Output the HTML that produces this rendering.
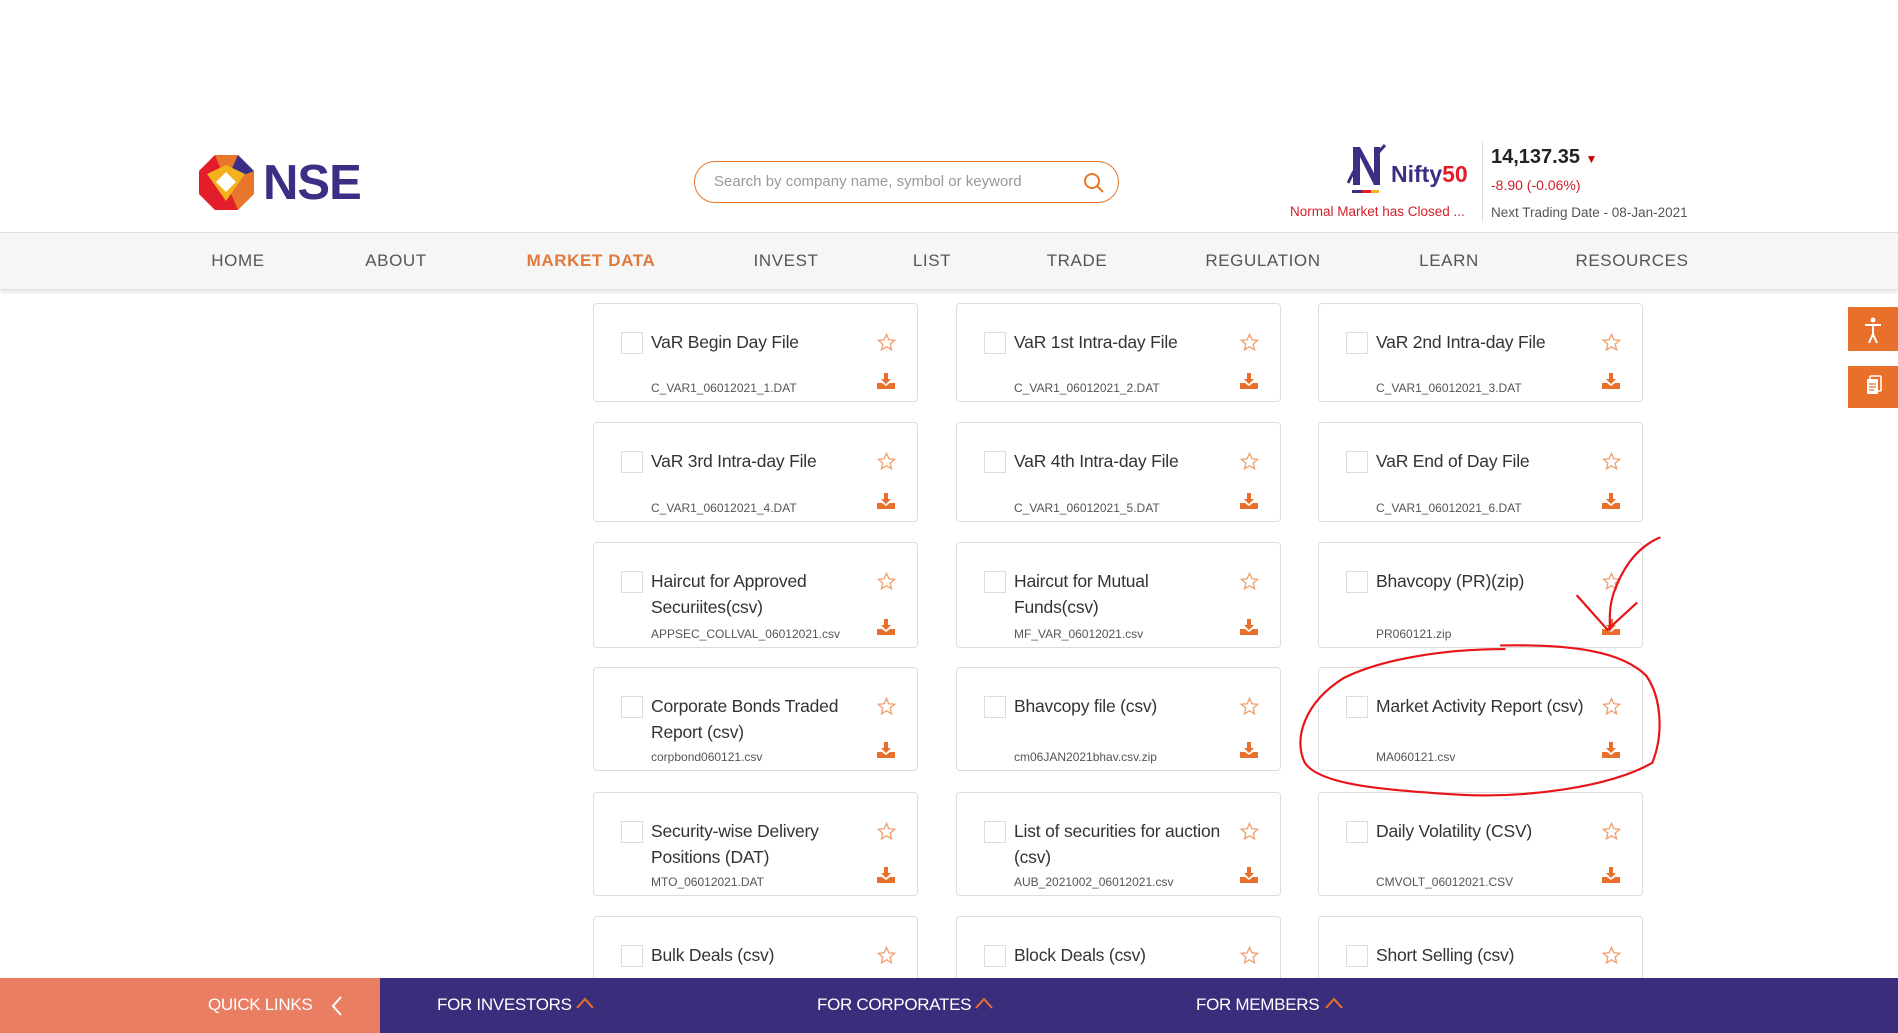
<!DOCTYPE html>
<html><head><meta charset="utf-8">
<style>
*{margin:0;padding:0;box-sizing:border-box}
body{width:1898px;height:1033px;position:relative;overflow:hidden;background:#fff;font-family:"Liberation Sans",sans-serif}
.abs{position:absolute}
.nav{position:absolute;left:0;top:232px;width:1898px;height:57px;background:#f6f6f6;border-top:1px solid #ddd;box-shadow:0 3px 4px rgba(0,0,0,.12)}
.nav span{position:absolute;top:18px;font-size:17px;color:#555;letter-spacing:.6px;transform:translateX(-50%)}
.card{position:absolute;width:325px;border:1px solid #ddd;border-radius:4px;background:#fff}
.card .cb{position:absolute;left:27px;top:28px;width:22px;height:22px;border:1px solid #ddd}
.card .t{position:absolute;left:57px;top:25px;width:220px;font-size:17.5px;line-height:26px;color:#333;letter-spacing:-.2px}
.card .f{position:absolute;left:57px;bottom:6px;font-size:12px;color:#555}
.card .s{position:absolute;right:21px;top:29px}
.card .d{position:absolute;right:22px;bottom:12px}
.bot{position:absolute;top:978px;height:55px;color:#fff;font-size:17px;letter-spacing:-.3px}
</style></head><body>
<svg class="abs" style="left:199px;top:155px" width="55" height="55" viewBox="0 0 55 55">
<polygon points="16,0 39,0 55,16 55,39 39,55 16,55 0,39 0,16" fill="#e8762c"/>
<polygon points="0,16 16,0 27,27 0,39" fill="#e31e2a"/>
<polygon points="0,39 27,27 39,55 16,55" fill="#e31e2a"/>
<polygon points="16,0 39,0 27,27" fill="#e8762c"/>
<polygon points="39,0 55,16 27,27" fill="#3b2f85"/>
<polygon points="8,19 27,10 46,19 27,46" fill="#f2b21c"/>
<polygon points="27,17 37,27 27,37 17,27" fill="#fff"/>
</svg>
<div class="abs" style="left:263px;top:153px;font-size:49px;font-weight:bold;color:#3b2f85;letter-spacing:-1px;line-height:60px">NSE</div>
<div class="abs" style="left:694px;top:161px;width:425px;height:42px;border:1px solid #e8762c;border-radius:21px"></div>
<div class="abs" style="left:714px;top:173px;font-size:15px;color:#999">Search by company name, symbol or keyword</div>
<svg class="abs" style="left:1083px;top:172px" width="22" height="22" viewBox="0 0 22 22"><circle cx="9" cy="9" r="7" fill="none" stroke="#e8762c" stroke-width="2"/><line x1="14" y1="14" x2="20" y2="20" stroke="#e8762c" stroke-width="2"/></svg>
<svg class="abs" style="left:1347px;top:143px" width="40" height="52" viewBox="0 0 40 52">
<path d="M6 4h7l14 26V4h6v38h-6L13 14v28H6z" fill="#3b2f85"/><path d="M1 40L7 28M31 10l7-8" stroke="#3b2f85" stroke-width="3"/>
<rect x="5" y="47" width="10" height="3" fill="#3b2f85"/><rect x="15" y="47" width="9" height="3" fill="#e31e2a"/><rect x="24" y="47" width="8" height="3" fill="#f2b21c"/></svg>
<div class="abs" style="left:1391px;top:161px;font-size:23px;font-weight:bold;color:#3b2f85">Nifty<span style="color:#e31e2a">50</span></div>
<div class="abs" style="left:1290px;top:204px;font-size:13.5px;color:#d0202a">Normal Market has Closed ...</div>
<div class="abs" style="left:1482px;top:142px;width:1px;height:80px;background:#ddd"></div>
<div class="abs" style="left:1491px;top:146px;font-size:20px;font-weight:bold;color:#222">14,137.35 <span style="color:#c00;font-size:12px">▼</span></div>
<div class="abs" style="left:1491px;top:177px;font-size:14px;color:#d0202a">-8.90 (-0.06%)</div>
<div class="abs" style="left:1491px;top:205px;font-size:13.5px;color:#555">Next Trading Date - 08-Jan-2021</div>
<div class="nav">
<span style="left:238px">HOME</span><span style="left:396px">ABOUT</span><span style="left:591px;color:#e07a3a;font-weight:bold">MARKET DATA</span><span style="left:786px">INVEST</span><span style="left:932px">LIST</span><span style="left:1077px">TRADE</span><span style="left:1263px">REGULATION</span><span style="left:1449px">LEARN</span><span style="left:1632px">RESOURCES</span>
</div>
<div class="abs" style="left:1848px;top:307px;width:50px;height:44px;background:#e8702a"><svg width="50" height="44" viewBox="0 0 50 44"><circle cx="25" cy="13" r="2.5" fill="#fff"/><path d="M17 18h16M25 18v9M25 27l-4 9M25 27l4 9" stroke="#fff" stroke-width="2" fill="none"/></svg></div>
<div class="abs" style="left:1848px;top:366px;width:50px;height:42px;background:#e8702a"><svg width="50" height="42" viewBox="0 0 50 42"><rect x="19" y="13" width="11" height="15" rx="1" fill="#fff"/><rect x="22" y="10" width="11" height="15" rx="1" fill="none" stroke="#fff" stroke-width="1.5"/><path d="M21 18h7M21 21h7M21 24h5" stroke="#e8702a" stroke-width="1.2"/></svg></div>

<svg width="0" height="0" style="position:absolute"><defs>
<symbol id="st" viewBox="0 0 20 20"><path d="M10 1.5l2.5 5.6 6 .6-4.6 4 1.4 6-5.3-3.2-5.3 3.2 1.4-6-4.6-4 6-.6z" fill="none" stroke="#f0a070" stroke-width="1.4"/></symbol>
<symbol id="dl" viewBox="0 0 18 16"><path d="M7 0h4v6h3l-5 5-5-5h3z" fill="#e8702a"/><path d="M0 10h5l4 3 4-3h5v6H0z" fill="#e8702a"/></symbol>
</defs></svg>

<div class="card" style="left:593px;top:303px;height:99px"><div class="cb"></div><div class="t">VaR Begin Day File</div><div class="f">C_VAR1_06012021_1.DAT</div><svg class="s" width="19" height="19"><use href="#st"/></svg><svg class="d" width="18" height="16"><use href="#dl"/></svg></div>
<div class="card" style="left:956px;top:303px;height:99px"><div class="cb"></div><div class="t">VaR 1st Intra-day File</div><div class="f">C_VAR1_06012021_2.DAT</div><svg class="s" width="19" height="19"><use href="#st"/></svg><svg class="d" width="18" height="16"><use href="#dl"/></svg></div>
<div class="card" style="left:1318px;top:303px;height:99px"><div class="cb"></div><div class="t">VaR 2nd Intra-day File</div><div class="f">C_VAR1_06012021_3.DAT</div><svg class="s" width="19" height="19"><use href="#st"/></svg><svg class="d" width="18" height="16"><use href="#dl"/></svg></div>

<div class="card" style="left:593px;top:422px;height:100px"><div class="cb"></div><div class="t">VaR 3rd Intra-day File</div><div class="f">C_VAR1_06012021_4.DAT</div><svg class="s" width="19" height="19"><use href="#st"/></svg><svg class="d" width="18" height="16"><use href="#dl"/></svg></div>
<div class="card" style="left:956px;top:422px;height:100px"><div class="cb"></div><div class="t">VaR 4th Intra-day File</div><div class="f">C_VAR1_06012021_5.DAT</div><svg class="s" width="19" height="19"><use href="#st"/></svg><svg class="d" width="18" height="16"><use href="#dl"/></svg></div>
<div class="card" style="left:1318px;top:422px;height:100px"><div class="cb"></div><div class="t">VaR End of Day File</div><div class="f">C_VAR1_06012021_6.DAT</div><svg class="s" width="19" height="19"><use href="#st"/></svg><svg class="d" width="18" height="16"><use href="#dl"/></svg></div>

<div class="card" style="left:593px;top:542px;height:106px"><div class="cb"></div><div class="t">Haircut for Approved Securiites(csv)</div><div class="f">APPSEC_COLLVAL_06012021.csv</div><svg class="s" width="19" height="19"><use href="#st"/></svg><svg class="d" width="18" height="16"><use href="#dl"/></svg></div>
<div class="card" style="left:956px;top:542px;height:106px"><div class="cb"></div><div class="t">Haircut for Mutual Funds(csv)</div><div class="f">MF_VAR_06012021.csv</div><svg class="s" width="19" height="19"><use href="#st"/></svg><svg class="d" width="18" height="16"><use href="#dl"/></svg></div>
<div class="card" style="left:1318px;top:542px;height:106px"><div class="cb"></div><div class="t">Bhavcopy (PR)(zip)</div><div class="f">PR060121.zip</div><svg class="s" width="19" height="19"><use href="#st"/></svg><svg class="d" width="18" height="16"><use href="#dl"/></svg></div>

<div class="card" style="left:593px;top:667px;height:104px"><div class="cb"></div><div class="t">Corporate Bonds Traded Report (csv)</div><div class="f">corpbond060121.csv</div><svg class="s" width="19" height="19"><use href="#st"/></svg><svg class="d" width="18" height="16"><use href="#dl"/></svg></div>
<div class="card" style="left:956px;top:667px;height:104px"><div class="cb"></div><div class="t">Bhavcopy file (csv)</div><div class="f">cm06JAN2021bhav.csv.zip</div><svg class="s" width="19" height="19"><use href="#st"/></svg><svg class="d" width="18" height="16"><use href="#dl"/></svg></div>
<div class="card" style="left:1318px;top:667px;height:104px"><div class="cb"></div><div class="t" style="width:240px">Market Activity Report (csv)</div><div class="f">MA060121.csv</div><svg class="s" width="19" height="19"><use href="#st"/></svg><svg class="d" width="18" height="16"><use href="#dl"/></svg></div>

<div class="card" style="left:593px;top:792px;height:104px"><div class="cb"></div><div class="t">Security-wise Delivery Positions (DAT)</div><div class="f">MTO_06012021.DAT</div><svg class="s" width="19" height="19"><use href="#st"/></svg><svg class="d" width="18" height="16"><use href="#dl"/></svg></div>
<div class="card" style="left:956px;top:792px;height:104px"><div class="cb"></div><div class="t" style="width:240px">List of securities for auction (csv)</div><div class="f">AUB_2021002_06012021.csv</div><svg class="s" width="19" height="19"><use href="#st"/></svg><svg class="d" width="18" height="16"><use href="#dl"/></svg></div>
<div class="card" style="left:1318px;top:792px;height:104px"><div class="cb"></div><div class="t">Daily Volatility (CSV)</div><div class="f">CMVOLT_06012021.CSV</div><svg class="s" width="19" height="19"><use href="#st"/></svg><svg class="d" width="18" height="16"><use href="#dl"/></svg></div>

<div class="card" style="left:593px;top:916px;height:104px"><div class="cb"></div><div class="t">Bulk Deals (csv)</div><svg class="s" width="19" height="19"><use href="#st"/></svg></div>
<div class="card" style="left:956px;top:916px;height:104px"><div class="cb"></div><div class="t">Block Deals (csv)</div><svg class="s" width="19" height="19"><use href="#st"/></svg></div>
<div class="card" style="left:1318px;top:916px;height:104px"><div class="cb"></div><div class="t">Short Selling (csv)</div><svg class="s" width="19" height="19"><use href="#st"/></svg></div>

<svg class="abs" style="left:0;top:0" width="1898" height="1033" viewBox="0 0 1568 853" fill="none" stroke="#e8141a" stroke-width="1.8" stroke-linecap="round">
<path d="M1371 444C1352 452 1340 470 1333 490C1329 503 1330 512 1330 520"/>
<path d="M1303 492L1328 520L1352 498"/>
<path d="M1243 536C1190 536 1140 545 1110 560C1078 580 1068 610 1078 630C1090 648 1140 652 1200 656C1260 660 1330 650 1365 630C1375 605 1372 575 1360 558C1340 538 1300 532 1240 533"/>
</svg>

<div class="bot" style="left:0;width:380px;background:#e97e62"><span class="abs" style="left:208px;top:17px">QUICK LINKS</span><svg class="abs" style="left:330px;top:17px" width="14" height="22"><path d="M11 2L3 11l8 9" stroke="#fff" stroke-width="2" fill="none"/></svg></div>
<div class="bot" style="left:380px;width:1518px;background:#3a2d7b">
<span class="abs" style="left:57px;top:17px">FOR INVESTORS</span><svg class="abs" style="left:195px;top:18px" width="20" height="14"><path d="M2 12l8-9 8 9" stroke="#e8702a" stroke-width="2" fill="none"/></svg>
<span class="abs" style="left:437px;top:17px">FOR CORPORATES</span><svg class="abs" style="left:594px;top:18px" width="20" height="14"><path d="M2 12l8-9 8 9" stroke="#e8702a" stroke-width="2" fill="none"/></svg>
<span class="abs" style="left:816px;top:17px">FOR MEMBERS</span><svg class="abs" style="left:944px;top:18px" width="20" height="14"><path d="M2 12l8-9 8 9" stroke="#e8702a" stroke-width="2" fill="none"/></svg>
</div>
</body></html>
